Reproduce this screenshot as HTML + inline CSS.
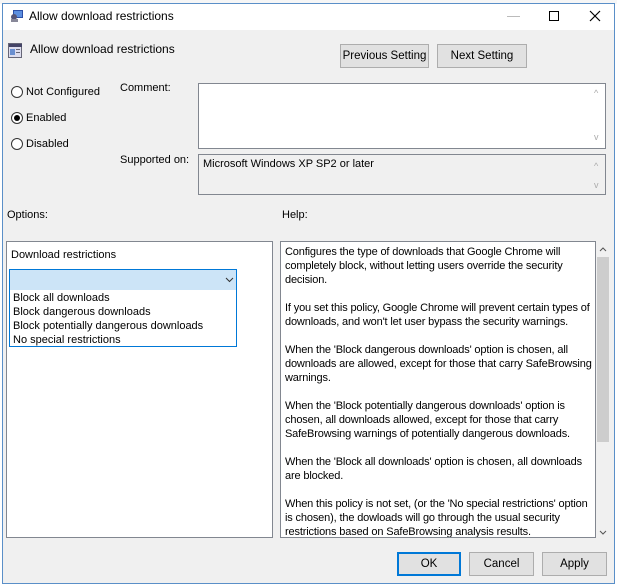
<!DOCTYPE html><html><head><meta charset="utf-8"><style>
*{margin:0;padding:0;box-sizing:border-box}
body{width:617px;height:588px;background:#fff;font-family:"Liberation Sans",sans-serif;font-size:11px;color:#000;position:relative;overflow:hidden}
.a{position:absolute;white-space:nowrap}
.btn{position:absolute;background:#e1e1e1;border:1px solid #adadad;text-align:center;font-size:11.5px}
.rad{position:absolute;width:12px;height:12px;border:1px solid #333;border-radius:50%;background:#fff}
.box{position:absolute;border:1px solid #828790;background:#fff}
.help div{height:14px;line-height:14px;white-space:nowrap;letter-spacing:-0.15px}
</style></head><body>
<div class="a" style="left:0;top:0;width:617px;height:4px;background:#f6f6f6"></div>
<div class="a" style="left:2px;top:3px;width:613px;height:581px;background:#f0f0f0;border:1px solid #5a8fc8"></div>
<div class="a" style="left:3px;top:4px;width:611px;height:26px;background:#fff"></div>
<svg class="a" style="left:10px;top:9px" width="14" height="14"><rect x="3" y="1" width="10" height="8" fill="#2b4fa8"/><rect x="4" y="2" width="8" height="6" fill="#5c8fe0"/><circle cx="4" cy="8" r="3" fill="#557"/><rect x="1" y="10" width="7" height="3" fill="#889"/></svg>
<div class="a" style="left:29px;top:9px;font-size:12px">Allow download restrictions</div>
<div class="a" style="left:507px;top:16px;width:13px;height:1px;background:#bbb"></div>
<div class="a" style="left:549px;top:11px;width:10px;height:10px;border:1px solid #000"></div>
<svg class="a" style="left:589px;top:10px" width="12" height="12"><path d="M1 1L11 11M11 1L1 11" stroke="#000" stroke-width="1.2"/></svg>
<svg class="a" style="left:8px;top:43px" width="15" height="15"><rect x="0.5" y="0.5" width="13" height="14" fill="#dde" stroke="#667"/><rect x="1" y="1" width="13" height="3" fill="#446"/><rect x="2" y="6" width="5" height="6" fill="#6a8fd0"/><rect x="8" y="6" width="4" height="1" fill="#667"/><rect x="8" y="9" width="4" height="1" fill="#667"/></svg>
<div class="a" style="left:30px;top:42px;font-size:12px">Allow download restrictions</div>
<div class="btn" style="left:340px;top:44px;width:89px;height:24px;line-height:22px">Previous Setting</div>
<div class="btn" style="left:437px;top:44px;width:90px;height:24px;line-height:22px">Next Setting</div>
<div class="rad" style="left:11px;top:86px"></div><div class="a" style="left:26px;top:86px">Not Configured</div>
<div class="rad" style="left:11px;top:112px"><div style="width:6px;height:6px;border-radius:50%;background:#000;margin:2px"></div></div><div class="a" style="left:26px;top:112px">Enabled</div>
<div class="rad" style="left:11px;top:138px"></div><div class="a" style="left:26px;top:138px">Disabled</div>
<div class="a" style="left:120px;top:82px">Comment:</div>
<div class="box" style="left:198px;top:83px;width:408px;height:66px"></div>
<div class="a" style="left:594px;top:88px;color:#aaa;font-size:9px">^</div>
<div class="a" style="left:594px;top:132px;color:#aaa;font-size:9px">v</div>
<div class="a" style="left:120px;top:154px">Supported on:</div>
<div class="box" style="left:198px;top:154px;width:408px;height:41px;background:#f0f0f0"></div>
<div class="a" style="left:203px;top:158px">Microsoft Windows XP SP2 or later</div>
<div class="a" style="left:594px;top:161px;color:#aaa;font-size:9px">^</div>
<div class="a" style="left:594px;top:180px;color:#aaa;font-size:9px">v</div>
<div class="a" style="left:7px;top:209px">Options:</div>
<div class="a" style="left:282px;top:209px">Help:</div>
<div class="box" style="left:6px;top:241px;width:267px;height:297px"></div>
<div class="a" style="left:11px;top:249px">Download restrictions</div>
<div class="a" style="left:9px;top:269px;width:228px;height:22px;background:#cce4f7;border:1px solid #0078d7"></div>
<svg class="a" style="left:225px;top:277px" width="9" height="6"><path d="M1 1L4.5 4.5L8 1" stroke="#333" fill="none"/></svg>
<div class="a" style="left:9px;top:290px;width:228px;height:57px;background:#fff;border:1px solid #0078d7;border-top:none;padding:1px 0 0 3px;line-height:14px">Block all downloads<br>Block dangerous downloads<br>Block potentially dangerous downloads<br>No special restrictions</div>
<div class="box help" style="left:280px;top:241px;width:316px;height:297px;padding:3px 0 0 4px;overflow:hidden">
<div>Configures the type of downloads that Google Chrome will</div><div>completely block, without letting users override the security</div><div>decision.</div><div></div>
<div>If you set this policy, Google Chrome will prevent certain types of</div><div>downloads, and won't let user bypass the security warnings.</div><div></div>
<div>When the 'Block dangerous downloads' option is chosen, all</div><div>downloads are allowed, except for those that carry SafeBrowsing</div><div>warnings.</div><div></div>
<div>When the 'Block potentially dangerous downloads' option is</div><div>chosen, all downloads allowed, except for those that carry</div><div>SafeBrowsing warnings of potentially dangerous downloads.</div><div></div>
<div>When the 'Block all downloads' option is chosen, all downloads</div><div>are blocked.</div><div></div>
<div>When this policy is not set, (or the 'No special restrictions' option</div><div>is chosen), the dowloads will go through the usual security</div><div>restrictions based on SafeBrowsing analysis results.</div>
</div>
<div class="a" style="left:597px;top:242px;width:12px;height:296px;background:#f0f0f0"></div>
<div class="a" style="left:597px;top:257px;width:12px;height:185px;background:#cdcdcd"></div>
<svg class="a" style="left:599px;top:247px" width="8" height="5"><path d="M1 4L4 1L7 4" stroke="#555" fill="none"/></svg>
<svg class="a" style="left:599px;top:530px" width="8" height="5"><path d="M1 1L4 4L7 1" stroke="#555" fill="none"/></svg>
<div class="btn" style="left:397px;top:552px;width:64px;height:24px;line-height:21px;border:2px solid #0078d7">OK</div>
<div class="btn" style="left:469px;top:552px;width:65px;height:24px;line-height:22px">Cancel</div>
<div class="btn" style="left:542px;top:552px;width:65px;height:24px;line-height:22px">Apply</div>
</body></html>
